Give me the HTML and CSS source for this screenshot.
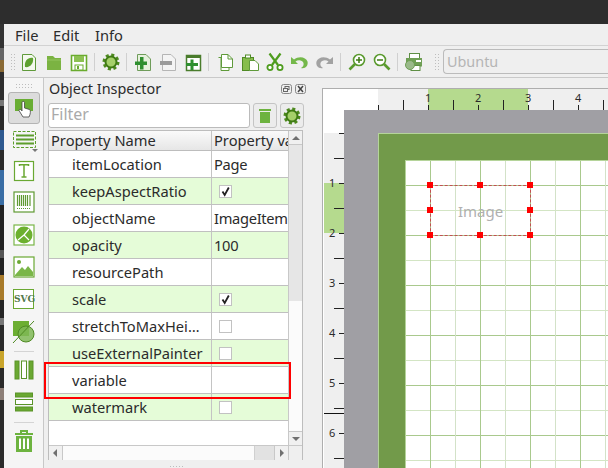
FILE: index.html
```html
<!DOCTYPE html>
<html lang="en">
<head>
  <meta charset="UTF-8">
  <title>Report Designer</title>
  <link rel="stylesheet" href="styles.css">
</head>
<body>
  <svg class="defs" width="0" height="0">
    <symbol id="gear" viewBox="0 0 20 20">
      <circle cx="10" cy="10" r="7" fill="none" stroke="#4d8a1e" stroke-width="3" stroke-dasharray="3 2.5"/>
      <circle cx="10" cy="10" r="5.5" fill="#a5d06a" stroke="#3f7a14" stroke-width="2"/>
    </symbol>
    <symbol id="check" viewBox="0 0 13 13">
      <path d="M3.5 6.5 L5.7 10 L9.8 2.5" fill="none" stroke="#222" stroke-width="1.8"/>
    </symbol>
  </svg>

  <div class="topbar"></div>
  <div class="desk">
    <div class="wallpaper"></div>
    <div class="window">
      <div class="menubar">
        <span class="menu-file">File</span>
        <span class="menu-edit">Edit</span>
        <span>Info</span>
      </div>

      <div class="toolbar">
        <div class="grip tool-grip"></div>
        <div class="tool"><svg width="20" height="20"><path d="M3.5 2.5H13L16.5 6V18.5H3.5Z" fill="#f4f8ee" stroke="#5f9a3a"/><path d="M6 15C5 9 9 5 14 6C15 11 11 16 6 15Z" fill="#5ea12f"/></svg></div>
        <div class="tool"><svg width="20" height="20"><path d="M3 4H9L11 6H17V18H3Z" fill="#7bb342"/><path d="M3 8H17" stroke="#94c65e"/></svg></div>
        <div class="tool"><svg width="20" height="20"><path d="M2.5 3.5H17.5V18.5H2.5Z" fill="#fff" stroke="#6aab2e" stroke-width="1.6"/><rect x="5" y="4" width="10" height="6" fill="#8cc152"/><rect x="6" y="13" width="8" height="5" fill="#fff" stroke="#6aab2e"/><rect x="8" y="14" width="2" height="3" fill="#6aab2e"/></svg></div>
        <div class="tool-sep"></div>
        <div class="tool"><svg width="20" height="20"><use href="#gear"/></svg></div>
        <div class="tool-sep"></div>
        <div class="tool"><svg width="20" height="20"><path d="M4.5 2.5H13L17.5 7V18.5H4.5Z" fill="#e6f1dd" stroke="#6f9c5a"/><path d="M2 9.5H7V5H10.5V9.5H14V13H10.5V17.5H7V13H2Z" fill="#2f8f2f"/></svg></div>
        <div class="tool"><svg width="20" height="20"><path d="M4.5 2.5H13L17.5 7V18.5H4.5Z" fill="#f4f4f4" stroke="#b5b5b5"/><rect x="2" y="9" width="12" height="4" fill="#9b9b9b"/></svg></div>
        <div class="tool"><svg width="20" height="20"><rect x="3.5" y="3.5" width="14" height="15" fill="#fff" stroke="#4a7c2c" stroke-width="1.5"/><rect x="3" y="3" width="15" height="3" fill="#4a7c2c"/><path d="M3 11H7.5V7.5H10.5V11H15V14H10.5V18H7.5V14H3Z" fill="#2f8f2f"/></svg></div>
        <div class="tool-sep"></div>
        <div class="tool"><svg width="20" height="20"><path d="M3.5 5.5H6V18.5H14V15.5" fill="#fff" stroke="#5f9a3a"/><path d="M6.5 2.5H13L17.5 7V15.5H6.5Z" fill="#fff" stroke="#5f9a3a"/><path d="M13 2.5V7H17.5" fill="none" stroke="#5f9a3a"/></svg></div>
        <div class="tool"><svg width="20" height="20"><rect x="2.5" y="5.5" width="11" height="13" fill="#86bd4c" stroke="#4f8a24"/><rect x="5.5" y="3" width="5" height="3" fill="#fff" stroke="#4f8a24"/><path d="M9.5 8.5H15L18.5 12V18.5H9.5Z" fill="#fff" stroke="#5f9a3a"/></svg></div>
        <div class="tool"><svg width="20" height="20"><path d="M4.5 1.5L13 13M15.5 1.5L7 13" stroke="#4e9c1e" stroke-width="2.2"/><circle cx="5" cy="15.5" r="2.6" fill="#fff" stroke="#4e9c1e" stroke-width="1.8"/><circle cx="15" cy="15.5" r="2.6" fill="#fff" stroke="#4e9c1e" stroke-width="1.8"/></svg></div>
        <div class="tool"><svg width="20" height="20"><path d="M1 5V12H8L5.5 9.5C8 7.5 12.5 8 13.5 11C14 13 13 15 11 16C15.5 17 18.5 13.5 17.5 9.5C16 5 9 3.5 4 7.5Z" fill="#74b84a"/></svg></div>
        <div class="tool"><svg width="20" height="20"><path d="M18 5V12H11L13.5 9.5C11 7.5 6.5 8 5.5 11C5 13 6 15 8 16C3.5 17 .5 13.5 1.5 9.5C3 5 10 3.5 15 7.5Z" fill="#a2a2a2"/></svg></div>
        <div class="tool-sep"></div>
        <div class="tool"><svg width="20" height="20"><circle cx="12" cy="8" r="5.5" fill="#fff" stroke="#5a9a2e" stroke-width="1.6"/><path d="M8 12L2.5 17.5" stroke="#5a9a2e" stroke-width="2.6"/><path d="M9 8H15M12 5V11" stroke="#3f7a14" stroke-width="1.5"/></svg></div>
        <div class="tool"><svg width="20" height="20"><circle cx="8" cy="8" r="5.5" fill="#fff" stroke="#5a9a2e" stroke-width="1.6"/><path d="M12 12L17.5 17.5" stroke="#5a9a2e" stroke-width="2.6"/><path d="M5 8H11" stroke="#3f7a14" stroke-width="1.5"/></svg></div>
        <div class="tool-sep"></div>
        <div class="tool"><svg width="20" height="20"><rect x="5.5" y="1.5" width="10" height="5" fill="#fff" stroke="#5f8f45"/><rect x="2" y="6" width="16" height="8.5" fill="#6f9f55"/><rect x="12" y="8" width="5" height="2" fill="#fff"/><rect x="7" y="13.5" width="9" height="5" fill="#fff" stroke="#5f8f45"/><circle cx="6" cy="13" r="4.5" fill="#9ab98a" stroke="#6f9f55"/></svg></div>
        <div class="grip font-grip"></div>
        <div class="font-box">Ubuntu</div>
      </div>

      <div class="main">
        <div class="dock">
          <div class="grip dock-grip"></div>
          <div class="dock-btn"><svg width="24" height="24"><rect x="3" y="3" width="18" height="12" fill="#69ad33"/><path d="M10 6.5C10 5 12.5 5 12.5 6.5V12L17.5 13.5C19 14.5 18.5 18 17 21H11L7 14.5C7 13 9 13 10 15Z" fill="#fff" stroke="#444" stroke-width=".8"/></svg></div>
          <div class="dock-item ico-band"><svg width="26" height="22"><rect x="1.5" y="1.5" width="22" height="16" fill="none" stroke="#5d9e2c" stroke-dasharray="3 1.5"/><path d="M4 5.5H22M4 9.5H22M4 13.5H22" stroke="#5d9e2c" stroke-width="2"/><path d="M20 19H26L23 22Z" fill="#777"/></svg></div>
          <div class="dock-item ico-text"><svg width="22" height="22"><rect x="1.5" y="1.5" width="19" height="19" fill="#fff" stroke="#6aa832" stroke-width="1.2"/><path d="M6.5 6V4.8H15.5V6M11 5V17M8.5 17H13.5" fill="none" stroke="#6aa832" stroke-width="1.5"/></svg></div>
          <div class="dock-item ico-barcode"><svg width="22" height="22"><rect x="1" y="1" width="20" height="20" fill="#fff" stroke="#5f9a32" stroke-width="1.2"/><path d="M4.5 4V15M6.5 4V15M8.5 4V15M10.5 4V15M12.5 4V15M14.5 4V15M17 4V15" stroke="#5f9a32" stroke-width="1.2"/><path d="M4 17.5H18" stroke="#5f9a32" stroke-dasharray="1 1"/></svg></div>
          <div class="dock-item ico-pie"><svg width="22" height="22"><rect x="1" y="1" width="20" height="20" fill="#fff" stroke="#7ab648" stroke-width="1.2"/><circle cx="11" cy="11" r="8.5" fill="#6cb02e"/><path d="M5 16L11 11M11 11L16 16M11 11L16 5" stroke="#fff" stroke-width="1.2" fill="none"/></svg></div>
          <div class="dock-item ico-image"><svg width="22" height="22"><rect x="1" y="1" width="20" height="20" fill="#fff" stroke="#6aa832" stroke-width="1.2"/><circle cx="6" cy="6" r="2" fill="#6aa832"/><path d="M2 19L9 11L12 14L15 10L20 16V20H2Z" fill="#7ab648"/></svg></div>
          <div class="dock-item ico-svg"><div class="svg-icon">SVG</div></div>
          <div class="dock-item ico-shape"><svg width="24" height="24"><rect x="1" y="1" width="16" height="15" fill="#6cae32"/><circle cx="14" cy="14" r="8" fill="#7fb856" fill-opacity=".85" stroke="#4f8a24"/><path d="M1 23L22 1" stroke="#4f8a24"/></svg></div>
          <div class="dock-sep sep-first"></div>
          <div class="dock-item ico-cols"><svg width="20" height="20"><rect x="1" y="1" width="4" height="18" fill="#6aa832" stroke="#5a9428"/><rect x="7.5" y="1" width="5" height="17.5" fill="#fff" stroke="#5a9428"/><rect x="15" y="1" width="4" height="18" fill="#6aa832" stroke="#5a9428"/></svg></div>
          <div class="dock-item ico-rows"><svg width="20" height="20"><rect x="1.5" y="1" width="17" height="4" fill="#6aa832" stroke="#5a9428"/><rect x="1.5" y="7.5" width="17" height="5" fill="#fff" stroke="#5a9428"/><rect x="1.5" y="15" width="17" height="4" fill="#6aa832" stroke="#5a9428"/></svg></div>
          <div class="dock-sep sep-second"></div>
          <div class="dock-item ico-trash"><svg width="20" height="24"><path d="M1 5H19M7 4V2H13V4" fill="none" stroke="#6db33f" stroke-width="2"/><rect x="2" y="7" width="16" height="16" fill="#6db33f"/><path d="M6 9.5V20M10 9.5V20M14 9.5V20" stroke="#fff" stroke-width="2"/></svg></div>
        </div>

        <div class="inspector">
          <div class="inspector-title">
            <span class="title-text">Object Inspector</span>
            <svg class="float-btn" width="11" height="10"><rect x=".5" y=".5" width="10" height="9" rx="2" fill="none" stroke="#888"/><rect x="4" y="2.5" width="4" height="3" fill="none" stroke="#666"/><rect x="2.5" y="4.5" width="4" height="3" fill="#eee" stroke="#666"/></svg>
            <svg class="float-btn close-btn" width="11" height="10"><rect x=".5" y=".5" width="10" height="9" rx="2" fill="none" stroke="#888"/><path d="M3 2L8 8M8 2L3 8" stroke="#444" stroke-width="1.5"/></svg>
          </div>
          <div class="filter-row">
            <div class="filter-box">Filter</div>
            <div class="square-btn"><svg width="14" height="16"><path d="M1 2H13" stroke="#6db33f" stroke-width="2"/><rect x="2" y="4" width="10" height="11" fill="#6db33f"/></svg></div>
            <div class="square-btn"><svg width="20" height="20"><use href="#gear"/></svg></div>
          </div>

          <div class="table">
            <div class="table-body">
              <div class="columns">
                <div class="head">
                  <div class="head-name">Property Name</div>
                  <div class="head-value">Property value</div>
                </div>
                <div class="row"><div class="name">itemLocation</div><div class="value">Page</div></div>
                <div class="row alt"><div class="name">keepAspectRatio</div><div class="value"><span class="box"><svg width="13" height="13"><use href="#check"/></svg></span></div></div>
                <div class="row"><div class="name">objectName</div><div class="value">ImageItem</div></div>
                <div class="row alt"><div class="name">opacity</div><div class="value">100</div></div>
                <div class="row"><div class="name">resourcePath</div><div class="value"></div></div>
                <div class="row alt"><div class="name">scale</div><div class="value"><span class="box"><svg width="13" height="13"><use href="#check"/></svg></span></div></div>
                <div class="row"><div class="name">stretchToMaxHei…</div><div class="value"><span class="box"></span></div></div>
                <div class="row alt"><div class="name">useExternalPainter</div><div class="value"><span class="box"></span></div></div>
                <div class="row"><div class="name">variable</div><div class="value"></div></div>
                <div class="row alt"><div class="name">watermark</div><div class="value"><span class="box"></span></div></div>
              </div>
              <div class="vscroll">
                <div class="arrow-btn up"></div>
                <div class="vtrough"></div>
                <div class="vthumb"></div>
                <div class="arrow-btn down"></div>
              </div>
            </div>
            <div class="hscroll">
              <div class="arrow-btn left"></div>
              <div class="hthumb"></div>
              <div class="htrough"></div>
              <div class="arrow-btn right"></div>
              <div class="corner"></div>
            </div>
          </div>
          <div class="grip bottom-grip"></div>
        </div>

        <div class="view">
          <div class="hruler-row">
            <div class="hruler">
              <span class="hmark"></span>
              <span class="hmark">1</span>
              <span class="hmark">2</span>
              <span class="hmark">3</span>
              <span class="hmark">4</span>
            </div>
          </div>
          <div class="stage-row">
            <div class="vruler-col">
              <div class="vruler">
                <span class="vmark"></span>
                <span class="vmark">1</span>
                <span class="vmark">2</span>
                <span class="vmark">3</span>
                <span class="vmark">4</span>
                <span class="vmark">5</span>
                <span class="vmark">6</span>
                <i class="cursor-line"></i>
              </div>
            </div>
            <div class="stage">
              <div class="page-margin">
                <div class="page-grid">
                  <div class="image-item">
                    Image
                    <i class="handle tl"></i><i class="handle tc"></i><i class="handle tr"></i>
                    <i class="handle ml"></i><i class="handle mr"></i>
                    <i class="handle bl"></i><i class="handle bc"></i><i class="handle br"></i>
                  </div>
                </div>
              </div>
            </div>
          </div>
        </div>
      </div>
    </div>
  </div>
  <div class="highlight"></div>
</body>
</html>
```

FILE: styles.css
```css
html, body {
  margin: 0;
  width: 608px;
  height: 468px;
  overflow: hidden;
}
body {
  position: relative;
  font-family: "Noto Sans", sans-serif;
  font-size: 14.67px;
  color: #2b2b2b;
  background: #2d2d2d;
}
.defs {
  position: absolute;
}
.topbar {
  height: 24px;
  background: #2d2d2d;
}
.desk {
  display: flex;
  height: 444px;
}
.wallpaper {
  flex: none;
  width: 4px;
  background: linear-gradient(#333 0 24px, #666 24px 36px, #8a6a35 36px 48px, #2e2e2e 48px 76px, #777 76px 82px, #2a2a2a 82px 106px, #2f5a90 106px 126px, #2a2a2a 126px 146px, #3a6ea5 146px 181px, #222 181px 226px, #555 226px 234px, #222 234px 251px, #a87a2a 251px 276px, #252525 276px 294px, #777 294px 301px, #2a2a2a 301px 327px, #c9a52c 327px 344px, #2a2a2a 344px 364px, #8d7f78 364px 376px, #2b2b2b 376px);
}
.window {
  flex: 1;
  min-width: 0;
  display: flex;
  flex-direction: column;
  background: #efefef;
}

.menubar {
  display: flex;
  align-items: center;
  height: 20px;
  padding: 1px 0 0 11px;
  border-bottom: 1px solid #d2d2d2;
}
.menu-file {
  width: 38px;
}
.menu-edit {
  width: 42px;
}

.toolbar {
  display: flex;
  align-items: center;
  height: 31px;
  padding-left: 6px;
  border-bottom: 1px solid #c9c9c9;
}
.grip {
  background-image: radial-gradient(#bdbdbd 0.8px, transparent 1px);
  background-size: 3px 3px;
}
.tool-grip {
  width: 6px;
  height: 18px;
}
.tool {
  display: flex;
  justify-content: center;
  width: 25px;
}
.tool-sep {
  width: 1px;
  height: 18px;
  margin: 0 3px;
  background: #d0d0d0;
}
.font-grip {
  width: 6px;
  height: 18px;
  margin: 0 3px 0 8px;
}
.font-box {
  flex: 1;
  height: 25px;
  line-height: 24px;
  padding-left: 3px;
  box-sizing: border-box;
  border: 1px solid #bbb;
  border-right: 0;
  border-radius: 4px 0 0 4px;
  font-size: 14.4px;
  color: #b5b5b5;
}

.main {
  flex: 1;
  display: flex;
  min-height: 0;
}
.dock {
  flex: none;
  width: 39px;
  display: flex;
  flex-direction: column;
  align-items: center;
  background: #f5f5f5;
  border-right: 1px solid #c8c8c8;
}
.dock-grip {
  width: 18px;
  height: 6px;
  margin-top: 5px;
}
.dock-btn {
  display: flex;
  align-items: center;
  justify-content: center;
  box-sizing: border-box;
  width: 32px;
  height: 32px;
  margin-top: 3px;
  border: 1px solid #b4b4b4;
  border-radius: 3px;
  background: #dcdcdc;
}
.dock-item {
  display: flex;
  justify-content: center;
  height: 22px;
}
.ico-band { margin: 6px 0 0 2px; }
.ico-text { margin-top: 8px; }
.ico-barcode { margin-top: 9px; }
.ico-pie { margin-top: 11px; }
.ico-image { margin-top: 10px; }
.ico-svg { margin-top: 11px; }
.ico-shape { height: 24px; margin-top: 9px; }
.ico-cols { height: 20px; margin-top: 8px; }
.ico-rows { height: 20px; margin-top: 12px; }
.ico-trash { height: 24px; margin-top: 6px; }
.dock-sep {
  width: 20px;
  height: 1px;
  background: #d4d4d4;
}
.sep-first { margin-top: 7px; }
.sep-second { margin-top: 10px; }
.svg-icon {
  box-sizing: border-box;
  width: 21px;
  height: 20px;
  border: 1px solid #6aa832;
  background: #fff;
  font-family: "DejaVu Serif", serif;
  font-size: 9px;
  font-weight: bold;
  line-height: 18px;
  text-align: center;
  color: #53794a;
}

.inspector {
  flex: none;
  position: relative;
  width: 274px;
  padding: 0 0 0 4px;
}
.inspector-title {
  display: flex;
  align-items: center;
  height: 21px;
  padding-left: 1px;
}
.title-text {
  font-size: 14.4px;
  flex: 1;
}
.float-btn {
  margin-right: 3px;
}
.close-btn {
  margin-right: 16px;
}
.filter-row {
  display: flex;
  gap: 3px;
  height: 25px;
  margin-top: 4px;
}
.filter-box {
  width: 202px;
  box-sizing: border-box;
  border: 1px solid #bbb;
  border-radius: 3px;
  background: #fff;
  padding-left: 2px;
  font-size: 16px;
  line-height: 21px;
  color: #aaa;
}
.square-btn {
  display: flex;
  align-items: center;
  justify-content: center;
  box-sizing: border-box;
  width: 24px;
  border: 1px solid #c4c4c4;
  border-radius: 3px;
  background: #ececec;
}
.table {
  box-sizing: border-box;
  width: 255px;
  height: 330px;
  margin-top: 2px;
  border: 1px solid #bdbdbd;
  background: #fff;
}
.table-body {
  display: flex;
  height: 314px;
}
.columns {
  width: 239px;
  overflow: hidden;
}
.head {
  display: flex;
  height: 19px;
  line-height: 19px;
  border-bottom: 1px solid #bdbdbd;
  background: linear-gradient(#fafafa, #e6e6e6);
}
.head-name {
  width: 160px;
  padding-left: 2px;
  border-right: 1px solid #c4c4c4;
}
.head-value {
  flex: 1;
  padding-left: 2px;
  white-space: nowrap;
  overflow: hidden;
}
.row {
  display: flex;
  height: 26px;
  line-height: 27px;
  border-bottom: 1px solid #c0c0c0;
}
.row.alt {
  background: #e5fcd8;
}
.name {
  width: 139px;
  padding-left: 23px;
  border-right: 1px solid #c4c4c4;
  white-space: nowrap;
}
.value {
  flex: 1;
  display: flex;
  align-items: center;
  padding-left: 2px;
  letter-spacing: -0.3px;
  white-space: nowrap;
  overflow: hidden;
}
.box {
  display: block;
  box-sizing: border-box;
  width: 13px;
  height: 13px;
  margin-left: 5px;
  border: 1px solid #c2c2c2;
  background: #fff;
}
.box svg {
  display: block;
  margin: -1px;
}

.vscroll {
  display: flex;
  flex-direction: column;
  width: 14px;
  border-left: 1px solid #c8c8c8;
  box-sizing: border-box;
}
.arrow-btn {
  position: relative;
  background: #f0f0f0;
}
.arrow-btn::after {
  content: "";
  position: absolute;
  top: 50%;
  left: 50%;
  border: 4px solid transparent;
}
.up, .down {
  height: 14px;
  border-bottom: 1px solid #c8c8c8;
  box-sizing: border-box;
}
.down {
  border-top: 1px solid #c8c8c8;
  border-bottom: 0;
}
.up::after {
  margin: -2px 0 0 -4px;
  border-bottom-color: #707070;
  border-top-width: 0;
}
.down::after {
  margin: -2px 0 0 -4px;
  border-top-color: #707070;
  border-bottom-width: 0;
}
.vtrough {
  height: 156px;
  background: #e6e6e6;
}
.vthumb {
  flex: 1;
  background: #fbfbfb;
}
.hscroll {
  display: flex;
  height: 14px;
  border-top: 1px solid #c8c8c8;
}
.left, .right {
  width: 13px;
  border-right: 1px solid #c8c8c8;
}
.right {
  border-right: 0;
  border-left: 1px solid #c8c8c8;
}
.left::after {
  margin: -4px 0 0 -3px;
  border-right-color: #707070;
  border-left-width: 0;
}
.right::after {
  margin: -4px 0 0 -2px;
  border-left-color: #707070;
  border-right-width: 0;
}
.hthumb {
  width: 191px;
  background: #fbfbfb;
}
.htrough {
  width: 20px;
  background: #e2e2e2;
  border-left: 1px solid #d0d0d0;
  box-sizing: border-box;
}
.corner {
  flex: 1;
  border-left: 1px solid #c8c8c8;
  background: #efefef;
}
.bottom-grip {
  width: 16px;
  height: 4px;
  margin: 5px 0 0 121px;
}

.view {
  box-sizing: border-box;
  flex: 1;
  min-width: 0;
  display: flex;
  flex-direction: column;
  height: 380px;
  margin-top: 10px;
  border: solid #aeaeae;
  border-width: 1px 0 0 1px;
  background: #fff;
  overflow: hidden;
}
.hruler-row {
  flex: none;
  height: 21px;
  padding-left: 55px;
}
.hruler {
  display: flex;
  height: 21px;
  background: repeating-linear-gradient(90deg, #222 0 1px, transparent 1px 50px) 0 100% / 100% 5px no-repeat,
    repeating-linear-gradient(90deg, transparent 0 25px, #222 25px 26px, transparent 26px 50px) 0 100% / 100% 10px no-repeat,
    linear-gradient(#b5da8e, #b5da8e) 50px 0 / 100px 100% no-repeat,
    #efefef;
}
.hmark {
  flex: none;
  box-sizing: border-box;
  width: 50px;
  height: 21px;
  padding-top: 2px;
  font-size: 11px;
  line-height: 14px;
  text-indent: -3px;
}
.stage-row {
  flex: 1;
  display: flex;
  min-height: 0;
}
.vruler-col {
  flex: none;
  box-sizing: border-box;
  width: 21px;
  padding: 23px 0 0 1px;
}
.vruler {
  position: relative;
  height: 340px;
  background: repeating-linear-gradient(180deg, #222 0 1px, transparent 1px 50px) 100% 0 / 5px 100% no-repeat,
    repeating-linear-gradient(180deg, transparent 0 25px, #222 25px 26px, transparent 26px 50px) 100% 0 / 10px 100% no-repeat,
    linear-gradient(#b5da8e, #b5da8e) 0 50px / 100% 50px no-repeat,
    #efefef;
}
.vmark {
  display: block;
  height: 50px;
  padding-left: 5px;
  font-size: 11px;
  line-height: 12px;
  transform: translateY(-6px);
}
.cursor-line {
  position: absolute;
  top: 280px;
  left: 0;
  right: 0;
  height: 1px;
  background: #111;
}
.stage {
  flex: 1;
  min-width: 0;
  padding: 23px 0 0 34px;
  background: #a09fa4;
}
.page-margin {
  box-sizing: border-box;
  height: 400px;
  padding: 26px 0 0 26px;
  background: #729a4a;
  border: solid #b5d49a;
  border-width: 1px 0 0 1px;
}
.page-grid {
  position: relative;
  height: 400px;
  background-color: #fff;
  background-image:
    repeating-linear-gradient(90deg, transparent 0 25px, #a9c98d 25px 26px, transparent 26px 50px),
    repeating-linear-gradient(90deg, #d3e2c8 0 1px, transparent 1px 50px),
    repeating-linear-gradient(180deg, #d3e5c4 0 1px, transparent 1px 25px, #a9c98d 25px 26px, transparent 26px 50px);
  background-origin: border-box;
  border: solid #b5d49a;
  border-width: 1px 0 0 1px;
}
.image-item {
  position: absolute;
  left: 24px;
  top: 24px;
  box-sizing: border-box;
  display: flex;
  align-items: center;
  justify-content: center;
  width: 101px;
  height: 51px;
  border: 1px dashed #c25050;
  font-size: 15px;
  color: #b0b0b0;
}
.handle {
  position: absolute;
  width: 6px;
  height: 6px;
  background: #f00;
}
.tl, .tc, .tr { top: -4px; }
.ml, .mr { top: 21px; }
.bl, .bc, .br { bottom: -3px; }
.tl, .ml, .bl { left: -4px; }
.tc, .bc { left: 46px; }
.tr, .mr, .br { right: -3px; }

.highlight {
  position: absolute;
  left: 44px;
  top: 362px;
  width: 243px;
  height: 33px;
  border: 2px solid #f00;
}
```
